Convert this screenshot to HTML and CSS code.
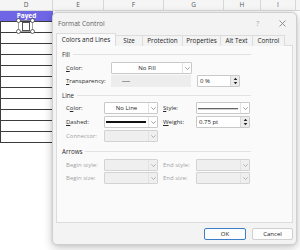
FILE: index.html
```html
<!DOCTYPE html>
<html>
<head>
<meta charset="utf-8">
<link rel="stylesheet" href="styles.css">
</head>
<body>
<div class="sheet">
  <div class="colhead">
    <div class="ch c-d">D</div>
    <div class="ch c-e">E</div>
    <div class="ch c-f">F</div>
    <div class="ch c-g">G</div>
    <div class="ch c-h">H</div>
    <div class="ch c-i">I</div>
    <div class="ch c-j"></div>
  </div>
  <div class="col-d">
    <div class="cell head">Payed</div>
    <div class="cell"></div><div class="cell"></div><div class="cell"></div><div class="cell"></div>
    <div class="cell"></div><div class="cell"></div><div class="cell"></div><div class="cell"></div>
    <div class="cell"></div><div class="cell"></div><div class="cell"></div>
  </div>
</div>

<svg class="shape" width="20" height="18" viewBox="0 0 20 18">
  <rect x="2.5" y="3.5" width="14" height="11" fill="none" stroke="#8a8a8a" stroke-width="0.8"/>
  <rect x="6.5" y="5.5" width="7" height="8" fill="#fff" stroke="#555" stroke-width="1"/>
  <circle cx="2.5" cy="3.5" r="2" fill="#fff" stroke="#444" stroke-width="0.8"/>
  <circle cx="16.5" cy="3.5" r="2" fill="#fff" stroke="#444" stroke-width="0.8"/>
  <circle cx="2.5" cy="14.5" r="2" fill="#fff" stroke="#444" stroke-width="0.8"/>
  <circle cx="16.5" cy="14.5" r="2" fill="#fff" stroke="#444" stroke-width="0.8"/>
</svg>

<div class="dialog">
  <div class="titlebar">
    <span class="title">Format Control</span>
    <span class="help">?</span>
    <svg class="close" width="7" height="7" viewBox="0 0 7 7"><path d="M0.5 0.5L6.5 6.5M6.5 0.5L0.5 6.5" stroke="#7a7a7a" stroke-width="0.8"/></svg>
  </div>
  <div class="tabs">
    <div class="tab active t1">Colors and Lines</div>
    <div class="tab t2">Size</div>
    <div class="tab t3">Protection</div>
    <div class="tab t4">Properties</div>
    <div class="tab t5">Alt Text</div>
    <div class="tab t6">Control</div>
  </div>
  <div class="panel">
    <div class="section"><span class="sec-label">Fill</span><span class="rule"></span></div>
    <div class="row r-first">
      <span class="lbl lw-fill"><u>C</u>olor:</span>
      <div class="combo cw-fill"><span class="ctext">No Fill</span><span class="drop"><svg width="5" height="3" viewBox="0 0 5 3"><polyline points="0.3,0.3 2.5,2.5 4.7,0.3" fill="none" stroke="#777" stroke-width="0.7"/></svg></span></div>
    </div>
    <div class="row r-tight">
      <span class="lbl lw-fill"><u>T</u>ransparency:</span>
      <div class="slider"><span class="dash"></span></div>
      <div class="spin sw-pct"><span class="stext">0 %</span><span class="spinbtn"><svg width="5" height="8" viewBox="0 0 5 8"><path d="M2.5 0.8L4.3 3H0.7Z M2.5 7.2L4.3 5H0.7Z" fill="#222"/></svg></span></div>
    </div>

    <div class="section s-line"><span class="sec-label">Line</span><span class="rule"></span></div>
    <div class="row r-first2">
      <span class="lbl lw-line">C<u>o</u>lor:</span>
      <div class="combo cw-line"><span class="ctext">No Line</span><span class="drop"><svg width="5" height="3" viewBox="0 0 5 3"><polyline points="0.3,0.3 2.5,2.5 4.7,0.3" fill="none" stroke="#777" stroke-width="0.7"/></svg></span></div>
      <span class="lbl lw-col2"><u>S</u>tyle:</span>
      <div class="combo cw-line"><span class="cline thin"></span><span class="drop"><svg width="5" height="3" viewBox="0 0 5 3"><polyline points="0.3,0.3 2.5,2.5 4.7,0.3" fill="none" stroke="#777" stroke-width="0.7"/></svg></span></div>
    </div>
    <div class="row r-gap">
      <span class="lbl lw-line"><u>D</u>ashed:</span>
      <div class="combo cw-line"><span class="cline thick"></span><span class="drop"><svg width="5" height="3" viewBox="0 0 5 3"><polyline points="0.3,0.3 2.5,2.5 4.7,0.3" fill="none" stroke="#777" stroke-width="0.7"/></svg></span></div>
      <span class="lbl lw-col2"><u>W</u>eight:</span>
      <div class="spin cw-line"><span class="stext">0.75 pt</span><span class="spinbtn"><svg width="5" height="8" viewBox="0 0 5 8"><path d="M2.5 0.8L4.3 3H0.7Z M2.5 7.2L4.3 5H0.7Z" fill="#222"/></svg></span></div>
    </div>
    <div class="row r-gap">
      <span class="lbl lw-line dis">Connector:</span>
      <div class="combo cw-line disabled"><span class="ctext"></span><span class="drop"><svg width="5" height="3" viewBox="0 0 5 3"><polyline points="0.3,0.3 2.5,2.5 4.7,0.3" fill="none" stroke="#999" stroke-width="0.7"/></svg></span></div>
    </div>

    <div class="section s-arrows"><span class="sec-label">Arrows</span><span class="rule"></span></div>
    <div class="row r-first3">
      <span class="lbl lw-line dis">Begin style:</span>
      <div class="combo cw-line disabled"><span class="ctext"></span><span class="drop"><svg width="5" height="3" viewBox="0 0 5 3"><polyline points="0.3,0.3 2.5,2.5 4.7,0.3" fill="none" stroke="#999" stroke-width="0.7"/></svg></span></div>
      <span class="lbl lw-col2 dis">End style:</span>
      <div class="combo cw-line disabled"><span class="ctext"></span><span class="drop"><svg width="5" height="3" viewBox="0 0 5 3"><polyline points="0.3,0.3 2.5,2.5 4.7,0.3" fill="none" stroke="#999" stroke-width="0.7"/></svg></span></div>
    </div>
    <div class="row r-tight">
      <span class="lbl lw-line dis">Begin size:</span>
      <div class="combo cw-line disabled"><span class="ctext"></span><span class="drop"><svg width="5" height="3" viewBox="0 0 5 3"><polyline points="0.3,0.3 2.5,2.5 4.7,0.3" fill="none" stroke="#999" stroke-width="0.7"/></svg></span></div>
      <span class="lbl lw-col2 dis">End size:</span>
      <div class="combo cw-line disabled"><span class="ctext"></span><span class="drop"><svg width="5" height="3" viewBox="0 0 5 3"><polyline points="0.3,0.3 2.5,2.5 4.7,0.3" fill="none" stroke="#999" stroke-width="0.7"/></svg></span></div>
    </div>
  </div>
  <div class="footer">
    <button class="btn ok">OK</button>
    <button class="btn cancel">Cancel</button>
  </div>
</div>
</body>
</html>
```
FILE: styles.css
```css
* { box-sizing: border-box; margin: 0; padding: 0; }
html, body { width: 300px; height: 250px; overflow: hidden; }
body {
  position: relative;
  background: #fff;
  font-family: "Open Sans", "Noto Sans", sans-serif;
  color: #2b2b2b;
}

/* spreadsheet */
.colhead {
  display: flex;
  height: 11px;
  background: #f5f5f5;
  border-bottom: 1px solid #d8d8d8;
}
.ch {
  font-size: 6.5px;
  line-height: 10px;
  color: #555;
  text-align: center;
  border-right: 1px solid #d8d8d8;
}
.c-d { width: 53px; }
.c-e { width: 51px; }
.c-f { width: 60px; }
.c-g { width: 60px; }
.c-h { width: 37px; }
.c-i { width: 35px; }
.c-j { flex: 1; border-right: 0; }

.col-d { width: 53px; }
.cell {
  height: 11px;
  border-left: 1px solid #3c3c3c;
  border-right: 1px solid #3c3c3c;
  border-bottom: 1px solid #3c3c3c;
}
.cell.head {
  background: #6f66e6;
  color: #fff;
  font-size: 6.5px;
  font-weight: 700;
  line-height: 10px;
  text-align: center;
  border-left: 0;
  border-right: 0;
  border-bottom: 1px solid #3c3c3c;
}

.shape { position: absolute; left: 16px; top: 17px; }

/* dialog */
.dialog {
  position: absolute;
  left: 52px;
  top: 12px;
  width: 245px;
  height: 233px;
  background: #f3f3f3;
  border: 1px solid #cfcfcf;
  border-radius: 5px;
  box-shadow: 0 3px 10px rgba(0,0,0,0.22), 0 0 3px rgba(0,0,0,0.1);
  display: flex;
  flex-direction: column;
}
.titlebar {
  height: 20px;
  display: flex;
  align-items: center;
  padding-left: 5px;
}
.title { font-size: 6.6px; color: #5f5f5f; flex: 1; }
.help { font-size: 6.5px; color: #a0a0a0; margin-right: 20px; }
.close { margin-right: 10px; }

.tabs {
  display: flex;
  align-items: flex-end;
  height: 13px;
  margin-left: 3px;
  position: relative;
  z-index: 1;
}
.tab {
  height: 11px;
  font-size: 6.3px;
  line-height: 10px;
  text-align: center;
  color: #262626;
  border: 1px solid #dcdcdc;
  border-bottom: 0;
  border-left: 0;
  background: #f3f3f3;
}
.tab.active {
  height: 13px;
  line-height: 12px;
  background: #fafafa;
  border-left: 1px solid #dcdcdc;
  border-right: 1px solid #dcdcdc;
}
.t1 { width: 60px; }
.t2 { width: 27px; }
.t3 { width: 40px; }
.t4 { width: 38px; }
.t5 { width: 32px; }
.t6 { width: 32px; }

.panel {
  margin: -1px 3px 0 3px;
  height: 178px;
  background: #fafafa;
  border: 1px solid #dcdcdc;
  border-top: 1px solid #dcdcdc;
  padding: 3px 41px 0 5px;
}
.section {
  height: 10px;
  display: flex;
  align-items: center;
  font-size: 6.2px;
  color: #2b2b2b;
}
.sec-label { margin-right: 3px; }
.rule { flex: 1; height: 1px; background: #e2e2e2; }
.s-line { margin-top: 3px; }
.s-arrows { margin-top: 4px; }

.row {
  display: flex;
  align-items: center;
  height: 12px;
  padding-left: 4px;
}
.r-first { margin-top: 3px; }
.r-first2 { margin-top: 2px; }
.r-first3 { margin-top: 3px; }
.r-tight { margin-top: 1px; }
.r-gap { margin-top: 2px; }

.lbl { font-size: 6px; color: #2b2b2b; white-space: nowrap; }
.lbl u { text-decoration-thickness: 0.6px; text-underline-offset: 1px; }
.lbl.dis { color: #a3a3a3; }
.lw-fill { width: 45px; }
.lw-line { width: 38px; }
.lw-col2 { width: 33px; margin-left: 5px; }

.combo, .spin {
  height: 12px;
  display: flex;
  align-items: center;
  background: #fff;
  border: 1px solid #c9c9c9;
  border-radius: 1px;
}
.combo.disabled { background: #efefef; border-color: #d3d3d3; }
.cw-fill { width: 81px; }
.cw-line { width: 54px; }
.ctext { flex: 1; text-align: center; font-size: 6px; color: #222; }
.drop {
  width: 9px;
  height: 10px;
  border-left: 1px solid #e2e2e2;
  display: flex;
  align-items: center;
  justify-content: center;
}
.cline { flex: 1; margin: 0 2px 0 1px; background: #111; }
.cline.thin { height: 1px; background: #666; box-shadow: 0 1px 0 #d0d0d0; }
.cline.thick { height: 2px; }

.slider {
  width: 80px;
  height: 12px;
  background: #ededed;
  display: flex;
  align-items: center;
}
.dash { width: 8px; height: 1px; background: #9a9a9a; margin-left: 11px; }
.sw-pct { width: 43px; margin-left: 6px; }
.stext { flex: 1; font-size: 6px; color: #222; padding-left: 2px; }
.spinbtn {
  width: 9px;
  height: 10px;
  background: #ececec;
  border-left: 1px solid #d6d6d6;
  display: flex;
  align-items: center;
  justify-content: center;
}

.footer {
  display: flex;
  justify-content: flex-end;
  gap: 6px;
  padding: 5px 3px 0 0;
}
.btn {
  height: 12px;
  font-family: "Open Sans", "Noto Sans", sans-serif;
  font-size: 6px;
  color: #222;
  background: #fdfdfd;
  border: 1px solid #d0d0d0;
  border-radius: 2px;
}
.btn.ok { width: 42px; border-color: #3c7fc8; }
.btn.cancel { width: 41px; }
```
